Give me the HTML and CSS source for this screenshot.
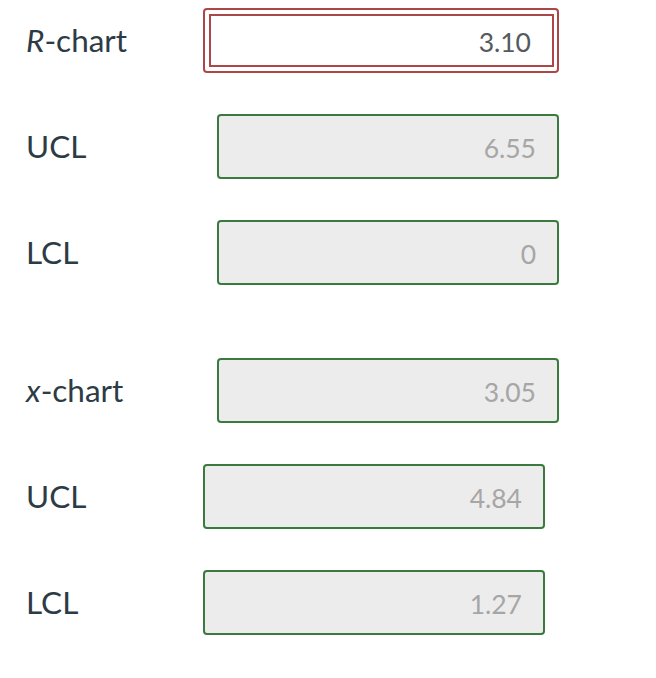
FILE: index.html
```html
<!DOCTYPE html>
<html>
<head>
<meta charset="utf-8">
<link rel="stylesheet" href="styles.css">
</head>
<body>
<div class="form">
  <div class="group">
    <div class="row">
      <div class="label label-narrow"><i>R</i>-chart</div>
      <div class="ring"><div class="field field-active">3.10</div></div>
    </div>
    <div class="row">
      <div class="label">UCL</div>
      <div class="field field-ok">6.55</div>
    </div>
    <div class="row">
      <div class="label">LCL</div>
      <div class="field field-ok">0</div>
    </div>
  </div>
  <div class="group">
    <div class="row">
      <div class="label"><i>x</i>-chart</div>
      <div class="field field-ok">3.05</div>
    </div>
    <div class="row">
      <div class="label label-narrow">UCL</div>
      <div class="field field-ok">4.84</div>
    </div>
    <div class="row">
      <div class="label label-narrow">LCL</div>
      <div class="field field-ok">1.27</div>
    </div>
  </div>
</div>
</body>
</html>
```

FILE: styles.css
```css
html, body {
  margin: 0;
  padding: 0;
  background: #ffffff;
}

body {
  font-family: Lato, "Open Sans", "Liberation Sans", sans-serif;
  color: #2d3b45;
}

.form {
  display: flex;
  flex-direction: column;
  gap: 73px;
  padding: 8px 0 0 26px;
}

.group {
  display: flex;
  flex-direction: column;
  gap: 41px;
}

.row {
  display: flex;
  align-items: center;
  height: 65px;
}

.label {
  width: 191px;
  flex: none;
  font-size: 31.5px;
  line-height: 1;
}

.label-narrow {
  width: 177px;
}

.label i {
  font-style: italic;
}

.ring {
  box-sizing: border-box;
  width: 356px;
  height: 65px;
  border: 2px solid #ad4747;
  border-radius: 4px;
  padding: 4px 3px 4px 4px;
  display: flex;
}

.field {
  box-sizing: border-box;
  width: 342px;
  height: 65px;
  border: 2px solid #3b7a3f;
  border-radius: 4px;
  background: #ececec;
  display: flex;
  align-items: center;
  justify-content: flex-end;
  padding: 3px 21px 0 0;
  font-size: 26.5px;
  color: #a6a6a6;
}

.field-active {
  flex: 1;
  width: auto;
  height: auto;
  border-color: #ad4747;
  border-radius: 0;
  background: #ffffff;
  color: #555a5e;
}
```
